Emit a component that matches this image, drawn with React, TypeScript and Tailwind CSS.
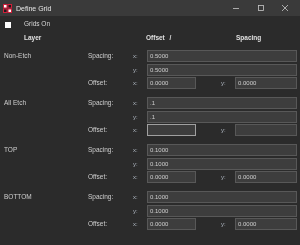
import React from "react";

const font = { fontFamily: '"Liberation Sans", Arial, sans-serif' };

type Group = {
  name: string;
  sx: string;
  sy: string;
  ox: string;
  oy: string;
  focus?: boolean;
};

const groups: Group[] = [
  { name: "Non-Etch", sx: "0.5000", sy: "0.5000", ox: "0.0000", oy: "0.0000" },
  { name: "All Etch", sx: ".1", sy: ".1", ox: "", oy: "", focus: true },
  { name: "TOP", sx: "0.1000", sy: "0.1000", ox: "0.0000", oy: "0.0000" },
  { name: "BOTTOM", sx: "0.1000", sy: "0.1000", ox: "0.0000", oy: "0.0000" },
];

function Field({ value, focus, className = "" }: { value: string; focus?: boolean; className?: string }) {
  return (
    <div
      className={`h-[12px] bg-[#3d3d3d] border ${focus ? "border-[#a0a0a0]" : "border-[#585858]"} flex items-center pl-[2px] text-[6px] text-[#cfcfcf] leading-none ${className}`}
    >
      {value}
    </div>
  );
}

function Axis({ t }: { t: string }) {
  return <div className="text-[6px] text-[#aeb6c0] leading-none">{t}</div>;
}

function GroupRows({ g }: { g: Group }) {
  return (
    <div className="grid grid-cols-[84px_45px_14px_150px] grid-rows-[12px_12px_12px] gap-y-[1.5px] items-center">
      <div className="text-[6.5px] text-[#cfcfcf] leading-none">{g.name}</div>
      <div className="text-[6.5px] text-[#cfcfcf] leading-none">Spacing:</div>
      <Axis t="x:" />
      <Field value={g.sx} />

      <div />
      <div />
      <Axis t="y:" />
      <Field value={g.sy} />

      <div />
      <div className="text-[6.5px] text-[#cfcfcf] leading-none">Offset:</div>
      <Axis t="x:" />
      <div className="flex items-center">
        <Field value={g.ox} focus={g.focus} className="w-[49px]" />
        <div className="w-[39px] pl-[25px]">
          <Axis t="y:" />
        </div>
        <Field value={g.oy} className="w-[62px]" />
      </div>
    </div>
  );
}

export default function App() {
  return (
    <div className="w-[300px] h-[245px] bg-[#2b2b2b] flex flex-col overflow-hidden antialiased will-change-transform" style={font}>
      <div className="h-[16px] bg-[#3a3a3a] flex items-center shrink-0">
        <svg width="9" height="9" viewBox="0 0 9 9" className="ml-[3px]">
          <rect x="0" y="0" width="9" height="9" fill="#2a2a3a" />
          <rect x="0.5" y="0.5" width="3.5" height="3.5" fill="#ffffff" stroke="#d0203a" strokeWidth="1" />
          <rect x="5" y="0.5" width="3.5" height="3.5" fill="#1a1a1a" stroke="#d0203a" strokeWidth="1" />
          <rect x="0.5" y="5" width="3.5" height="3.5" fill="#1a1a1a" stroke="#d0203a" strokeWidth="1" />
          <rect x="5" y="5" width="3.5" height="3.5" fill="#ffffff" stroke="#d0203a" strokeWidth="1" />
        </svg>
        <div className="ml-[4px] text-[7px] text-[#e6e6e6] leading-none">Define Grid</div>
        <div className="flex-1" />
        <svg width="60" height="16" viewBox="0 0 60 16" className="mr-[7px]">
          <line x1="0" y1="8.5" x2="6" y2="8.5" stroke="#c8c8c8" strokeWidth="0.8" />
          <rect x="25.5" y="5.5" width="5" height="5" fill="none" stroke="#c8c8c8" strokeWidth="0.8" />
          <line x1="49" y1="5" x2="55" y2="11" stroke="#c8c8c8" strokeWidth="0.8" />
          <line x1="55" y1="5" x2="49" y2="11" stroke="#c8c8c8" strokeWidth="0.8" />
        </svg>
      </div>

      <div className="pl-[4px]">
        <div className="h-[16px] flex items-center">
          <div className="w-[6px] h-[6px] bg-white ml-[1px] mt-[1px]" />
          <div className="ml-[13px] text-[6.5px] text-[#d8d8d8] leading-none">Grids On</div>
        </div>
        <div className="h-[12px] flex items-center font-bold text-[6.5px] text-[#e0e0e0] leading-none">
          <div className="w-[142px] pl-[20px]">Layer</div>
          <div className="w-[90px]">
            Offset <span className="ml-[3px]">/</span>
          </div>
          <div>Spacing</div>
        </div>
        <div className="mt-[6px] flex flex-col gap-[8px]">
          {groups.map((g) => (
            <GroupRows key={g.name} g={g} />
          ))}
        </div>
      </div>
    </div>
  );
}
